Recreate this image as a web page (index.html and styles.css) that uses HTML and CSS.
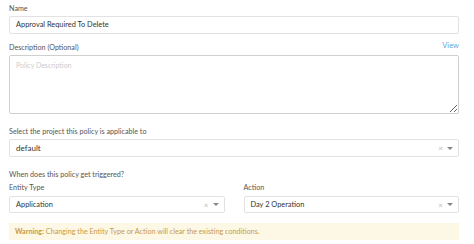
FILE: index.html
```html
<!DOCTYPE html>
<html lang="en">
<head>
  <meta charset="UTF-8">
  <title>Policy</title>
  <link rel="stylesheet" href="styles.css">
</head>
<body>
  <div class="form">
    <div class="field">
      <label class="label">Name</label>
      <div class="input">Approval Required To Delete</div>
    </div>

    <div class="field">
      <div class="label-row">
        <label class="label">Description (Optional)</label>
        <a class="link">View</a>
      </div>
      <textarea class="textarea" placeholder="Policy Description"></textarea>
    </div>

    <div class="field field-project">
      <label class="label">Select the project this policy is applicable to</label>
      <div class="select select-tall">
        <span class="select-value">default</span>
        <span class="select-icons"><span class="clear">&times;</span><span class="caret"></span></span>
      </div>
    </div>

    <div class="trigger">
      <div class="label">When does this policy get triggered?</div>
      <div class="row">
        <div class="col">
          <label class="label">Entity Type</label>
          <div class="select">
            <span class="select-value">Application</span>
            <span class="select-icons"><span class="clear">&times;</span><span class="caret"></span></span>
          </div>
        </div>
        <div class="col">
          <label class="label">Action</label>
          <div class="select">
            <span class="select-value">Day 2 Operation</span>
            <span class="select-icons"><span class="clear">&times;</span><span class="caret"></span></span>
          </div>
        </div>
      </div>
    </div>

    <div class="warning"><strong>Warning:</strong> Changing the Entity Type or Action will clear the existing conditions.</div>
  </div>
</body>
</html>
```

FILE: styles.css
```css
* {
  box-sizing: border-box;
  margin: 0;
  padding: 0;
}

body {
  font-family: Lato, 'Open Sans', sans-serif;
  color: #333;
  background-color: #fff;
}

.form {
  width: 450px;
  margin-left: 9px;
  padding-top: 4px;
}

.label {
  display: block;
  font-size: 7.2px;
  line-height: 10px;
  color: #555;
}

.field {
  display: flex;
  flex-direction: column;
  gap: 2px;
  margin-bottom: 7px;
}

.label-row {
  display: flex;
  justify-content: space-between;
  align-items: flex-end;
}

.link {
  font-size: 7.5px;
  color: #6aa9d8;
  line-height: 10px;
  padding-bottom: 2px;
}

.input {
  height: 18px;
  border: 1px solid #e2e2e2;
  border-radius: 2px;
  padding: 0 6px;
  font-size: 7.4px;
  line-height: 16px;
  color: #333;
}

.textarea {
  display: block;
  height: 59px;
  border: 1px solid #cfcfcf;
  border-radius: 2px;
  padding: 5px 6px;
  font-family: inherit;
  font-size: 7px;
  color: #333;
  resize: vertical;
}

.textarea::placeholder {
  color: #ccc;
}

.field-project {
  margin-top: 13px;
  margin-bottom: 13px;
}

.select {
  height: 17px;
  border: 1px solid #e2e2e2;
  border-radius: 2px;
  padding: 0 5px 0 6px;
  display: flex;
  justify-content: space-between;
  align-items: center;
  font-size: 7.4px;
  color: #333;
}

.select-tall {
  height: 18px;
  font-size: 8px;
}

.select-icons {
  display: flex;
  align-items: center;
  gap: 4px;
  color: #bbb;
}

.clear {
  font-size: 8px;
  line-height: 8px;
}

.caret {
  width: 0;
  height: 0;
  border-left: 3px solid transparent;
  border-right: 3px solid transparent;
  border-top: 3px solid #888;
}

.trigger {
  display: flex;
  flex-direction: column;
  gap: 3px;
}

.row {
  display: flex;
  gap: 19px;
}

.col {
  flex: 1;
  display: flex;
  flex-direction: column;
  gap: 3px;
}

.warning {
  margin-top: 10px;
  height: 17px;
  background-color: #fdf7e6;
  color: #c99a45;
  font-size: 7.2px;
  line-height: 17px;
  padding: 0 6px;
}

.warning strong {
  font-weight: 700;
}
```
